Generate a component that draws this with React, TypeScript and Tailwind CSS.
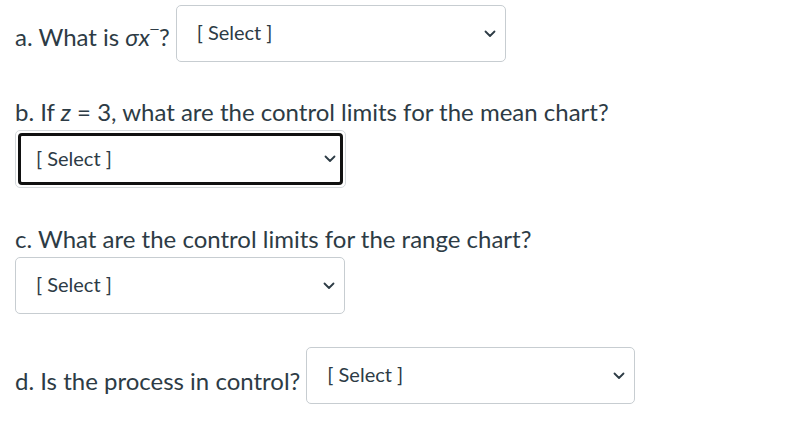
import React from "react";

const Chevron = () => (
  <svg width="12" height="8" viewBox="0 0 12 8" className="shrink-0">
    <polyline points="1.5,1.5 6,6 10.5,1.5" fill="none" stroke="#2d3b45" strokeWidth="1.8" strokeLinecap="round" strokeLinejoin="round" />
  </svg>
);

const SelectBox = ({ width, focused }: { width: number; focused?: boolean }) => {
  if (focused) {
    return (
      <div className="rounded-[5px] border border-[#d5d9dc] p-[2px]" style={{ width }}>
        <div className="flex h-[52px] items-center justify-between rounded-[4px] border-[3px] border-[#111] pl-[15px] pr-[4px]">
          <span className="text-[20px] text-[#2d3b45] -mt-[3px]">[ Select ]</span>
          <Chevron />
        </div>
      </div>
    );
  }
  return (
    <div
      className="flex h-[57px] items-center justify-between rounded-[5px] border border-[#c7cdd1] pl-[20px] pr-[9px]"
      style={{ width }}
    >
      <span className="text-[20px] text-[#2d3b45] -mt-[3px]">[ Select ]</span>
      <Chevron />
    </div>
  );
};

export default function App() {
  return (
    <div className="min-h-screen w-[793px] bg-white px-[15px] pt-[5px] text-[#2d3b45]" style={{ fontFamily: "Lato, 'Open Sans', sans-serif" }}>
      <div className="flex items-start gap-[6px]">
        <div className="pt-[14px] text-[24px] leading-[36px]">
          a. What is <i>σx</i><span className="relative -top-[6px] text-[14px]">‾</span>?
        </div>
        <SelectBox width={330} />
      </div>

      <div className="mt-[32px] text-[24px] leading-[36px]">
        b. If <i>z</i> = 3, what are the control limits for the mean chart?
      </div>
      <div>
        <SelectBox width={331} focused />
      </div>

      <div className="mt-[33px] text-[24px] leading-[36px]">
        c. What are the control limits for the range chart?
      </div>
      <div>
        <SelectBox width={330} />
      </div>

      <div className="mt-[33px] flex items-start gap-[6px]">
        <div className="pt-[16px] text-[24px] leading-[36px]">d. Is the process in control?</div>
        <SelectBox width={329} />
      </div>
    </div>
  );
}
